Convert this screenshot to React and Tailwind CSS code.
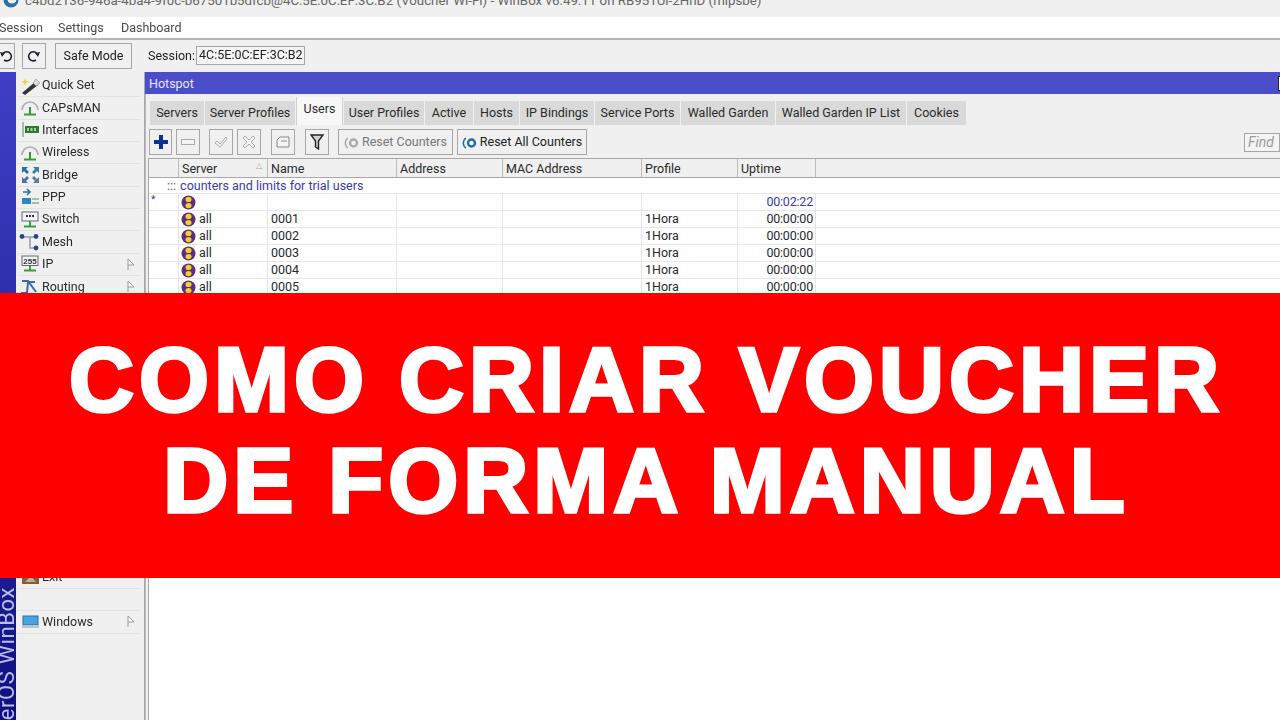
import React from "react";

const U = () => (
  <svg width="15" height="15" viewBox="0 0 15 15" className="shrink-0">
    <circle cx="7.5" cy="7.5" r="7" fill="#5f2c7e" />
    <ellipse cx="7.5" cy="4.4" rx="3" ry="2.7" fill="#efd02c" />
    <ellipse cx="7.5" cy="10.6" rx="3" ry="2.7" fill="#efd02c" />
  </svg>
);

const Ant = () => (
  <svg width="24" height="18" viewBox="0 0 24 18">
    <path d="M5 11a8 8 0 0 1 16 0" fill="none" stroke="#a8b0b0" strokeWidth="1.6" />
    <path d="M13 8v8" stroke="#3d8f3d" strokeWidth="2" />
    <path d="M7 15.5h12" stroke="#3d9a3d" strokeWidth="2" />
  </svg>
);

const icons = {
  quick: (
    <svg width="24" height="18" viewBox="0 0 24 18">
      <path d="M5 16 18 5l3 3L8 18z" fill="#333" />
      <path d="M16 6l3-4 4 4-4 3z" fill="#dcdcdc" stroke="#777" strokeWidth=".5" />
      <path d="M8 1l1 3 3 1-3 1-1 3-1-3-3-1 3-1z" fill="#e6d53a" />
    </svg>
  ),
  cap: <Ant />,
  wireless: <Ant />,
  ifs: (
    <svg width="24" height="18" viewBox="0 0 24 18">
      <path d="M6 1v15" stroke="#8fa8a8" strokeWidth="1.5" />
      <rect x="8" y="5" width="14" height="7" fill="#2c7a2c" />
      <path d="M10 7h2v3h-2zM13.5 7h2v3h-2zM17 7h2v3h-2z" fill="#a5cfa5" />
    </svg>
  ),
  bridge: (
    <svg width="24" height="18" viewBox="0 0 24 18">
      <path d="M5 1h6l-2 2 3 3-2 2-3-3-2 2z" fill="#2b6f9e" />
      <path d="M22 1v6l-2-2-3 3-2-2 3-3-2-2z" fill="#3c7fa0" />
      <path d="M5 17v-6l2 2 3-3 2 2-3 3 2 2z" fill="#4a6fae" />
      <path d="M22 17h-6l2-2-3-3 2-2 3 3 2-2z" fill="#5a7f9e" />
    </svg>
  ),
  ppp: (
    <svg width="24" height="18" viewBox="0 0 24 18">
      <path d="M6 4h7M10 1l3 3-3 3" fill="none" stroke="#2a6fa8" strokeWidth="1.5" />
      <rect x="5" y="10" width="9" height="6" fill="#2f86c4" />
      <path d="M15 10h7v2h-7zM15 14h7v2h-7z" fill="#a9bda9" />
    </svg>
  ),
  sw: (
    <svg width="24" height="18" viewBox="0 0 24 18">
      <rect x="5" y="1" width="16" height="9" fill="#f4f4f4" stroke="#667" />
      <path d="M9 4h2v2H9zM12 4h2v2h-2zM15 4h2v2h-2z" fill="#334" />
      <path d="M13 10v6M7 15.5h12" stroke="#3d9a3d" strokeWidth="2" />
    </svg>
  ),
  mesh: (
    <svg width="24" height="18" viewBox="0 0 24 18">
      <path d="M6 4h12M13 4v11h5" fill="none" stroke="#99a" strokeWidth="1.5" />
      <circle cx="5" cy="3.5" r="2.4" fill="#26468f" />
      <circle cx="19" cy="3.5" r="2.4" fill="#26468f" />
      <circle cx="19" cy="15" r="2.4" fill="#26468f" />
    </svg>
  ),
  ip: (
    <svg width="24" height="18" viewBox="0 0 24 18">
      <rect x="5" y="1" width="16" height="9.5" fill="#f4f4f4" stroke="#667" />
      <text x="13" y="9" fontSize="8" fontWeight="700" textAnchor="middle" fill="#333" fontFamily="Liberation Sans">255</text>
      <path d="M13 11v5M7 15.5h12" stroke="#3d9a3d" strokeWidth="2" />
    </svg>
  ),
  routing: (
    <svg width="24" height="18" viewBox="0 0 24 18">
      <path d="M4 15h6l1-11h7M5 3h6l8 11" fill="none" stroke="#3a68a8" strokeWidth="2" />
    </svg>
  ),
  exit: (
    <svg width="24" height="18" viewBox="0 0 24 18">
      <rect x="5" y="0" width="17" height="16" fill="#8a5a30" />
      <path d="M8 14l6-6 5 6z" fill="#b9b0a0" />
    </svg>
  ),
  win: (
    <svg width="24" height="18" viewBox="0 0 24 18">
      <rect x="6" y="3" width="15" height="9" fill="#4aa3e0" stroke="#2c6f9f" />
      <rect x="5" y="12" width="17" height="3" fill="#b8c4cc" />
    </svg>
  ),
};

const Arrow = () => (
  <svg width="8" height="13" viewBox="0 0 8 13" className="ml-auto mr-[6px] shrink-0">
    <path d="M1 1v11M1 1l6 6H1" fill="#fff" stroke="#999" strokeWidth="1" />
  </svg>
);

const side = [
  ["Quick Set", "quick"],
  ["CAPsMAN", "cap"],
  ["Interfaces", "ifs"],
  ["Wireless", "wireless"],
  ["Bridge", "bridge"],
  ["PPP", "ppp"],
  ["Switch", "sw"],
  ["Mesh", "mesh"],
  ["IP", "ip", 1],
  ["Routing", "routing", 1],
  ["System", "sw", 1],
  ["Queues", "sw"],
  ["Files", "sw"],
  ["Log", "sw"],
  ["RADIUS", "sw"],
  ["Tools", "sw", 1],
  ["New Terminal", "sw"],
  ["MetaROUTER", "sw"],
  ["Partition", "sw"],
  ["Make Supout.rif", "sw"],
  ["Manual", "sw"],
  ["New WinBox", "sw"],
  ["Exit", "exit"],
  ["", null],
  ["Windows", "win", 1],
];

const tabs = [
  ["Servers", 54],
  ["Server Profiles", 90],
  ["Users", 47, 1],
  ["User Profiles", 80],
  ["Active", 48],
  ["Hosts", 45],
  ["IP Bindings", 74],
  ["Service Ports", 85],
  ["Walled Garden", 94],
  ["Walled Garden IP List", 130],
  ["Cookies", 59],
];

const cols = [30, 89, 129, 106, 139, 96, 78];

const Btn = ({ className = "", children }) => (
  <div className={`h-[26px] border border-[#a6a6a6] bg-[#f0f0f0] flex items-center justify-center shrink-0 ${className}`}>
    {children}
  </div>
);

const Row = ({ server, name, profile, uptime, blue, dot }) => {
  const cells = [
    <span className="text-[#3a3ab0] text-[10px] pl-[2px] -mt-[4px]">{dot ? "*" : ""}</span>,
    <span className="flex items-center gap-[3px] pl-[2px]"><U /><span>{server}</span></span>,
    <span className="pl-[3px]">{name}</span>,
    null,
    null,
    <span className="pl-[3px]">{profile}</span>,
    <span className={`w-full text-right pr-[2px] tracking-[-0.2px] ${blue ? "text-[#3a3ab0]" : ""}`}>{uptime}</span>,
  ];
  return (
    <div className="flex h-[17px] border-b border-[#e6e6e6] text-[#2a2a2a]">
      {cols.map((w, i) => (
        <div key={i} style={{ width: w }} className="shrink-0 flex items-center overflow-hidden border-r border-[#e6e6e6]">
          {cells[i]}
        </div>
      ))}
    </div>
  );
};

export default function App() {
  return (
    <div className="relative w-[1280px] h-[720px] overflow-hidden bg-white font-['Roboto','Liberation_Sans',sans-serif] text-[12.5px] leading-none text-[#2a2a2a]">
      <div className="blur-[0.35px]">
        {/* title bar */}
        <div className="h-[17px] bg-[#f0f0f0] flex overflow-hidden">
          <svg width="16" height="16" viewBox="0 0 16 16" className="ml-[3px] -mt-[8px] shrink-0">
            <circle cx="8" cy="8" r="7.5" fill="#2c6fa8" />
            <circle cx="9" cy="7" r="4.5" fill="#f0f0f0" />
          </svg>
          <span className="ml-[6px] -mt-[6px] whitespace-nowrap text-[13.3px] leading-[14px] text-[#666]">
            c4bd2136-946a-4ba4-9f0c-b67501b5dfcb@4C:5E:0C:EF:3C:B2 (Voucher Wi-Fi) - WinBox v6.49.11 on RB951Ui-2HnD (mipsbe)
          </span>
        </div>
        {/* menu */}
        <div className="h-[23px] bg-white border-b-2 border-[#b4b4b4] flex items-center text-[#4a4a4a] -ml-[1px] pt-[1px]">
          <span className="w-[59px]">Session</span>
          <span className="w-[63px]">Settings</span>
          <span>Dashboard</span>
        </div>
        {/* toolbar */}
        <div className="h-[32px] bg-[#f0f0f0] flex items-center -ml-[4px] text-[#222]">
          <Btn className="w-[19px]">
            <svg width="14" height="12" viewBox="0 0 14 12"><path d="M3.5 4.5a4.6 4.6 0 1 1 1.5 5.5" fill="none" stroke="#223" strokeWidth="1.6" /><path d="M1 2l5 1-3 4z" fill="#223" /></svg>
          </Btn>
          <Btn className="w-[24px] ml-[7px]">
            <svg width="14" height="12" viewBox="0 0 14 12"><path d="M10.5 4.5a4.6 4.6 0 1 0-1.5 5.5" fill="none" stroke="#223" strokeWidth="1.6" /><path d="M13 2 8 3l3 4z" fill="#223" /></svg>
          </Btn>
          <Btn className="w-[77px] ml-[9px] pt-[1px]">Safe Mode</Btn>
          <span className="ml-[16px] pt-[1px]">Session:</span>
          <div className="ml-[1px] w-[109px] h-[19px] bg-[#f4f4f4] border border-[#a6a6a6] flex items-center pl-[2px] -mt-[1px] whitespace-nowrap">4C:5E:0C:EF:3C:B2</div>
        </div>
        {/* main */}
        <div className="h-[648px] flex">
          <div className="relative w-[16px] shrink-0 overflow-hidden bg-gradient-to-b from-[#3f3fc6] to-[#0f0f80]">
            <span className="absolute left-[-3px] top-[515px] [writing-mode:vertical-rl] rotate-180 whitespace-nowrap text-[22px] tracking-[0.6px] leading-[20px] text-[#bdbdea]">RouterOS WinBox</span>
          </div>
          <div className="w-[129px] shrink-0 bg-[#f0f0f0] border-r border-[#a8a8a8] pt-[3px] pl-[1px] pr-[3px]">
            {side.map(([label, ic, arrow], i) => (
              <div key={i} className="h-[22.35px] border-b border-[#e2e2e2] flex items-center gap-[1px]">
                {ic ? icons[ic] : null}
                <span className="text-[#2a2a2a]">{label}</span>
                {arrow ? <Arrow /> : null}
              </div>
            ))}
          </div>
          <div className="flex-1 min-w-0 flex flex-col">
            <div className="h-[22px] bg-[#4c4dc9] flex items-center pl-[4px] pt-[2px] text-[#e8e8ff] relative">
              Hotspot
              <div className="absolute right-[-2px] top-[4px] w-[4px] h-[15px] bg-white border border-[#222]" />
            </div>
            <div className="flex-1 min-h-0 flex flex-col border-l border-[#b8b8b8] bg-[#f0f0f0]">
              {/* tabs */}
              <div className="h-[34px] flex items-end pb-[3px] pl-[4px] gap-[1px] shrink-0">
                {tabs.map(([t, w, active]) => (
                  <div key={t} style={{ width: w }} className={`flex items-center justify-center shrink-0 ${active ? "h-[28px] bg-[#f7f7f7] border-x border-[#cfcfcf] pb-[4px]" : "h-[24px] bg-[#d9d9d9]"}`}>
                    {t}
                  </div>
                ))}
              </div>
              {/* actions */}
              <div className="h-[28px] shrink-0 flex items-center pl-[3px] text-[#777]">
                <Btn className="w-[23px]">
                  <svg width="14" height="14" viewBox="0 0 14 14"><path d="M5 0h4v5h5v4H9v5H5V9H0V5h5z" fill="#0f2f96" /></svg>
                </Btn>
                <Btn className="w-[24px] ml-[4px]">
                  <svg width="14" height="6" viewBox="0 0 14 6"><rect x=".5" y=".5" width="13" height="5" fill="#f4f4f4" stroke="#aaa" /></svg>
                </Btn>
                <Btn className="w-[24px] ml-[9px]">
                  <svg width="14" height="14" viewBox="0 0 14 14"><path d="M1 8l2-2 3 3 6-7 1 2-7 8z" fill="#f4f4f4" stroke="#aaa" /></svg>
                </Btn>
                <Btn className="w-[24px] ml-[4px]">
                  <svg width="14" height="14" viewBox="0 0 14 14"><path d="M3 1l4 4 4-4 2 2-4 4 4 4-2 2-4-4-4 4-2-2 4-4-4-4z" fill="#f4f4f4" stroke="#aaa" /></svg>
                </Btn>
                <Btn className="w-[24px] ml-[10px]">
                  <svg width="14" height="12" viewBox="0 0 14 12"><path d="M4 1h9v10H1V4z" fill="#f4f4f4" stroke="#888" /><path d="M5 5h6" stroke="#888" /></svg>
                </Btn>
                <Btn className="w-[24px] ml-[10px]">
                  <svg width="14" height="16" viewBox="0 0 14 16"><path d="M1 1h12L8.5 7v8l-3-2V7z" fill="#cfd4d8" stroke="#222" strokeWidth="1.4" /></svg>
                </Btn>
                <Btn className="w-[115px] ml-[9px] gap-[3px] pt-[1px]">
                  <svg width="15" height="12" viewBox="0 0 15 12"><path d="M4 1a6 6 0 0 0 0 10" fill="none" stroke="#aaa" strokeWidth="1.5" /><circle cx="9.5" cy="6" r="3.5" fill="none" stroke="#aaa" strokeWidth="2.4" /></svg>
                  Reset Counters
                </Btn>
                <Btn className="w-[130px] ml-[4px] gap-[3px] text-[#222] pt-[1px]">
                  <svg width="15" height="12" viewBox="0 0 15 12"><path d="M4 1a6 6 0 0 0 0 10" fill="none" stroke="#1d6fa5" strokeWidth="1.5" /><circle cx="9.5" cy="6" r="3.5" fill="none" stroke="#1d6fa5" strokeWidth="2.4" /></svg>
                  Reset All Counters
                </Btn>
                <div className="ml-auto w-[36px] h-[19px] border border-[#a6a6a6] bg-[#f4f4f4] flex items-center pl-[3px] italic text-[14px] text-[#9a9a9a] shrink-0">Find</div>
              </div>
              {/* table */}
              <div className="flex-1 mt-[2px] ml-[2px] bg-white flex flex-col min-h-0 border-l border-[#a8a8a8]">
                <div className="h-[20px] flex bg-[#f0f0f0] border-y border-[#a8a8a8] text-[#2a2a2a] shrink-0">
                  {["", "Server", "Name", "Address", "MAC Address", "Profile", "Uptime"].map((h, i) => (
                    <div key={i} style={{ width: cols[i] }} className="relative shrink-0 border-r border-[#bcbcbc] flex items-center pl-[3px] pt-[2px]">
                      {h}
                      {h === "Server" ? <span className="absolute right-[5px] top-[3px] text-[8px] text-[#aaa]">△</span> : null}
                    </div>
                  ))}
                </div>
                <div className="h-[16px] flex items-center border-b border-[#e6e6e6] pl-[18px] pt-[1px] text-[#3a3ab0] shrink-0">
                  <span className="mr-[4px] text-[#555]">:::</span> counters and limits for trial users
                </div>
                <div>
                  <Row uptime="00:02:22" blue dot />
                  {["0001", "0002", "0003", "0004", "0005"].map((n) => (
                    <Row key={n} server="all" name={n} profile="1Hora" uptime="00:00:00" />
                  ))}
                </div>
              </div>
            </div>
          </div>
        </div>
      </div>
      {/* banner */}
      <div className="absolute left-0 top-[293px] w-full h-[285px] bg-[#ff0000] flex flex-col items-center justify-center font-['Liberation_Sans',Arial,sans-serif] text-white font-bold text-[90px] leading-[101px] tracking-[5px] whitespace-nowrap [-webkit-text-stroke:3.5px_white] pb-[10px] pl-[13px]">
        <div>COMO CRIAR VOUCHER</div>
        <div>DE FORMA MANUAL</div>
      </div>
    </div>
  );
}
